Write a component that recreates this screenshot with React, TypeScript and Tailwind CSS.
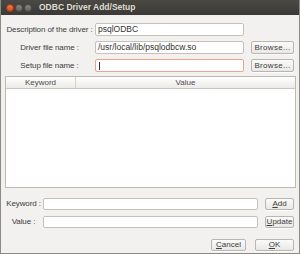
import React from "react";

const font = { fontFamily: '"Liberation Sans", Arial, sans-serif' };

function Btn({ children, className = "" }: { children: React.ReactNode; className?: string }) {
  return (
    <div
      className={
        "flex items-center justify-center rounded-[2px] border border-[#b9b6b0] bg-gradient-to-b from-[#fbfbfa] to-[#e9e8e6] text-[8px] leading-none text-[#3c3c3c] shadow-[0_1px_0_rgba(255,255,255,0.8)] " +
        className
      }
    >
      {children}
    </div>
  );
}

function Input({ className = "", children }: { className?: string; children?: React.ReactNode }) {
  return (
    <div
      className={
        "flex items-center rounded-[2px] border border-[#c4c1bb] bg-white px-[2px] text-[8.5px] leading-none text-[#333] " +
        className
      }
    >
      {children}
    </div>
  );
}

const label = "text-center text-[8px] tracking-[-0.1px] leading-none whitespace-nowrap text-[#3c3c3c]";

export default function App() {
  return (
    <div
      className="flex h-[254px] w-[300px] flex-col overflow-hidden border-x border-b border-[#8c8a85] bg-[#f2f1f0] text-[#3c3c3c]"
      style={font}
    >
      {/* Title bar */}
      <div className="flex h-[15px] shrink-0 items-center bg-gradient-to-b from-[#4a4944] to-[#3a3935] pl-[5px]">
        <div className="h-[8px] w-[8px] rounded-full border border-[#a83a14] bg-gradient-to-b from-[#f27a4d] to-[#d9491b]" />
        <div className="ml-[1px] h-[8px] w-[8px] rounded-full border border-[#4c4b47] bg-gradient-to-b from-[#8a8883] to-[#66645f]" />
        <div className="ml-[1px] h-[8px] w-[8px] rounded-full border border-[#4c4b47] bg-gradient-to-b from-[#8a8883] to-[#66645f]" />
        <div className="ml-[7px] text-[8.5px] font-bold leading-none text-[#dfdbd2]">ODBC Driver Add/Setup</div>
      </div>

      {/* Body */}
      <div className="flex flex-1 flex-col px-[3px] pt-[8px]">
        <div className="flex h-[13px] items-center">
          <div className={"w-[91px] " + label}>Description of the driver :</div>
          <Input className="h-[13px] w-[149px]">psqlODBC</Input>
        </div>
        <div className="mt-[5px] flex h-[13px] items-center">
          <div className={"w-[91px] " + label}>Driver file name :</div>
          <Input className="h-[13px] w-[149px]">/usr/local/lib/psqlodbcw.so</Input>
          <Btn className="ml-[7px] h-[13px] w-[43px] tracking-[0.3px]">Browse...</Btn>
        </div>
        <div className="mt-[5px] flex h-[13px] items-center">
          <div className={"w-[91px] " + label}>Setup file name :</div>
          <div className="flex h-[13px] w-[149px] items-center rounded-[2px] border border-[#eaa58a] bg-white px-[3px]">
            <div className="h-[8px] w-[1px] bg-[#333]" />
          </div>
          <Btn className="ml-[7px] h-[13px] w-[43px] tracking-[0.3px]">Browse...</Btn>
        </div>

        {/* Table */}
        <div className="ml-[1px] mt-[4px] flex h-[112px] w-[291px] flex-col border border-[#bdbab4] bg-white">
          <div className="flex h-[12px] shrink-0 border-b border-[#c9c6c0] bg-gradient-to-b from-[#ffffff] to-[#ecebe9] text-[8px] leading-none text-[#4a4a4a]">
            <div className="flex w-[70px] items-center justify-center border-r border-[#d3d0ca]">Keyword</div>
            <div className="flex flex-1 items-center justify-center">Value</div>
          </div>
        </div>

        {/* Keyword / Value */}
        <div className="mt-[10px] flex h-[12px] items-center">
          <div className={"w-[39px] " + label}>Keyword :</div>
          <Input className="h-[12px] w-[215px]" />
          <Btn className="ml-[7px] h-[12px] w-[29px]">
            <span className="underline">A</span>dd
          </Btn>
        </div>
        <div className="mt-[6px] flex h-[12px] items-center">
          <div className={"w-[39px] " + label}>Value :</div>
          <Input className="h-[12px] w-[215px]" />
          <Btn className="ml-[7px] h-[12px] w-[29px]">
            <span className="underline">U</span>pdate
          </Btn>
        </div>

        {/* Bottom buttons */}
        <div className="mt-[11px] flex h-[12px] justify-end pr-[2px]">
          <Btn className="h-[12px] w-[35px]">
            <span className="underline">C</span>ancel
          </Btn>
          <Btn className="ml-[9px] h-[12px] w-[39px]">
            <span className="underline">O</span>K
          </Btn>
        </div>
      </div>
    </div>
  );
}
